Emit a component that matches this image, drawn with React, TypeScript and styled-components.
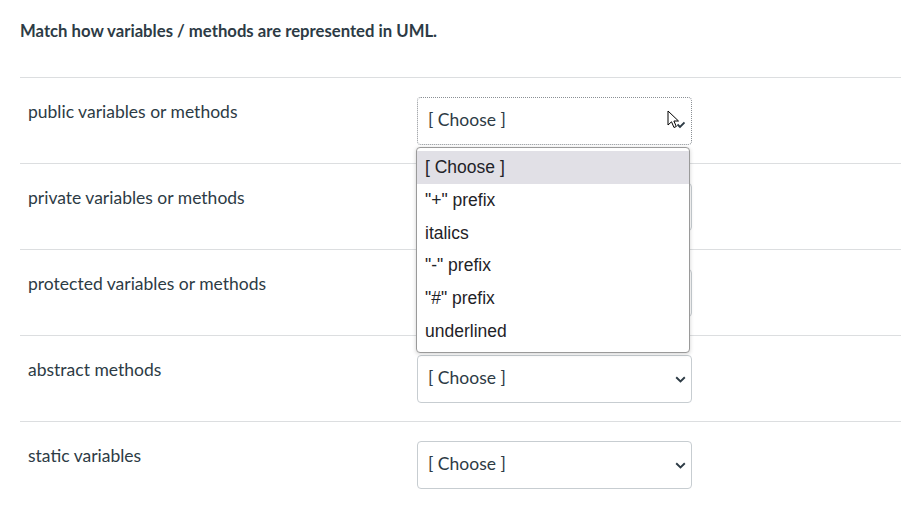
import React from "react";
import styled, { createGlobalStyle } from "styled-components";

const GlobalStyle = createGlobalStyle`
  body {
    margin: 0;
    background: #ffffff;
    font-family: Lato, "Liberation Sans", sans-serif;
    color: #2d3b45;
  }
`;

const prompts = [
  "public variables or methods",
  "private variables or methods",
  "protected variables or methods",
  "abstract methods",
  "static variables",
];

const options = [
  "[ Choose ]",
  '"+" prefix',
  "italics",
  '"-" prefix',
  '"#" prefix',
  "underlined",
];

function Chevron() {
  return (
    <svg width="11" height="7" viewBox="0 0 11 7">
      <path d="M1.2 1.2 L5.5 5.4 L9.8 1.2" fill="none" stroke="#2d3b45" strokeWidth="1.9" />
    </svg>
  );
}

function Cursor() {
  return (
    <CursorMark width="18" height="22" viewBox="0 0 18 22">
      <path
        d="M1 1 L1 15 L4.5 11.8 L7 17.5 L9.3 16.5 L6.9 11 L11.5 11 Z"
        fill="#ffffff"
        stroke="#000000"
        strokeWidth="1"
        strokeLinejoin="round"
      />
      <path d="M10.5 14.5 L13 17 L17.5 12.5" fill="none" stroke="#2d3b45" strokeWidth="1.8" />
    </CursorMark>
  );
}

function App() {
  return (
    <Page>
      <GlobalStyle />
      <Title>Match how variables / methods are represented in UML.</Title>
      <List>
        {prompts.map((p, i) => (
          <Row key={p}>
            <Label>{p}</Label>
            <SelectWrap>
              <Select $focused={i === 0}>
                <SelectText>[ Choose ]</SelectText>
                {i !== 0 && <Chevron />}
              </Select>
              {i === 0 && (
                <>
                  <Cursor />
                  <Menu>
                    {options.map((o, j) => (
                      <MenuItem key={o} $active={j === 0}>
                        {o}
                      </MenuItem>
                    ))}
                  </Menu>
                </>
              )}
            </SelectWrap>
          </Row>
        ))}
      </List>
    </Page>
  );
}

const Page = styled.div`
  padding: 21px 0 0 20px;
`;

const Title = styled.h2`
  margin: 0 0 35px;
  font-size: 16.7px;
  font-weight: 700;
  line-height: 21px;
  color: #2d3b45;
`;

const List = styled.div`
  display: flex;
  flex-direction: column;
`;

const Row = styled.div`
  display: grid;
  grid-template-columns: 397px 275px;
  height: 86px;
  border-top: 1px solid #dcdee0;
  box-sizing: border-box;
`;

const Label = styled.div`
  padding: 22px 0 0 8px;
  font-size: 17.5px;
  line-height: 24px;
  color: #2d3b45;
`;

const SelectWrap = styled.div`
  position: relative;
  padding-top: 19px;
`;

const Select = styled.div<{ $focused: boolean }>`
  display: flex;
  align-items: center;
  justify-content: space-between;
  height: 48px;
  box-sizing: border-box;
  padding: 0 5px 3px 10px;
  border: 1px ${(p) => (p.$focused ? "dotted #8a8f94" : "solid #c7cdd1")};
  border-radius: 4px;
  background: #ffffff;

  svg {
    margin-top: 3px;
  }
`;

const SelectText = styled.span`
  font-size: 17.5px;
  color: #2d3b45;
`;

const CursorMark = styled.svg`
  position: absolute;
  left: 250px;
  top: 32px;
`;

const Menu = styled.div`
  position: absolute;
  left: -1px;
  top: 69px;
  width: 274px;
  box-sizing: border-box;
  padding: 3px 0 4px;
  border: 1px solid #9a9a9a;
  border-radius: 4px;
  background: #ffffff;
  box-shadow: 0 1px 4px rgba(0, 0, 0, 0.18);
  z-index: 2;
`;

const MenuItem = styled.div<{ $active: boolean }>`
  height: 32.8px;
  line-height: 32px;
  padding-left: 8px;
  font-family: "Liberation Sans", Arial, sans-serif;
  font-size: 17.5px;
  color: #1f2328;
  background: ${(p) => (p.$active ? "#e1e0e6" : "transparent")};
`;

export default App;
